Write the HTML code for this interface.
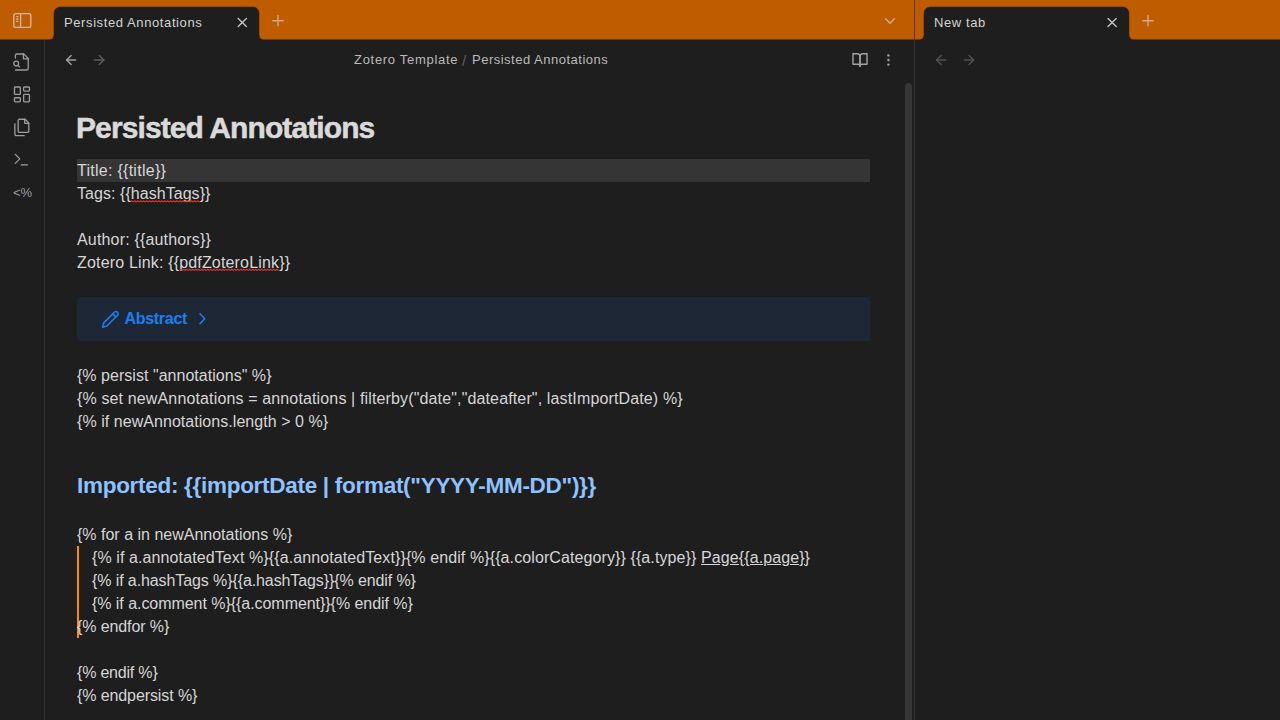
<!DOCTYPE html>
<html><head><meta charset="utf-8">
<style>
*{box-sizing:border-box;margin:0;padding:0}
html,body{width:1280px;height:720px;overflow:hidden;background:#1e1e1e;font-family:"Liberation Sans",sans-serif;color:#dadada}
.abs{position:absolute}
#hdr{left:0;top:0;width:1280px;height:40px;background:#bf5c00}
#ribbon{left:0;top:40px;width:45px;height:680px;background:#1e1e1e;border-right:1px solid #303030}
#divider{left:913px;top:40px;width:2px;height:680px;background:#2a2a2a}
#divider2{left:914px;top:0;width:1px;height:40px;background:#5e3208}
.tabtitle{position:absolute;font-size:13px;color:#d4d4d4;white-space:pre;letter-spacing:0.6px}
.txt{position:absolute;white-space:pre;font-size:16px;line-height:18px;color:#d6d6d6}
svg{position:absolute;overflow:visible}
.ic{fill:none;stroke-linecap:round;stroke-linejoin:round}
</style></head><body>
<div id="hdr" class="abs"></div>
<div id="ribbon" class="abs"></div>
<div id="divider2" class="abs"></div>

<!-- tabs -->
<svg width="1280" height="40" style="left:0;top:0">
  <rect x="0" y="39.4" width="1280" height="0.6" fill="#3a2410"/>
  <path d="M48 40.5 A6 6 0 0 0 54 34.5 V13 A6 6 0 0 1 60 7 H253 A6 6 0 0 1 259 13 V34.5 A6 6 0 0 0 265 40.5" fill="#1e1e1e" stroke="#3a2410" stroke-width="0.6"/>
  <path d="M918 40.5 A6 6 0 0 0 924 34.5 V13 A6 6 0 0 1 930 7 H1123 A6 6 0 0 1 1129 13 V34.5 A6 6 0 0 0 1135 40.5" fill="#1e1e1e" stroke="#3a2410" stroke-width="0.6"/>
  <!-- sidebar toggle -->
  <g class="ic" stroke="#ccb8a4" stroke-width="1.4">
    <rect x="13.8" y="13.6" width="17" height="13.8" rx="2"/>
    <line x1="20.6" y1="13.6" x2="20.6" y2="27.4"/>
    <line x1="16.8" y1="16.6" x2="17.8" y2="16.6"/>
    <line x1="16.8" y1="19" x2="17.8" y2="19"/>
    <line x1="16.8" y1="21.4" x2="17.8" y2="21.4"/>
  </g>
  <!-- close x tab1 -->
  <g class="ic" stroke="#c4c4c4" stroke-width="1.4">
    <line x1="238.2" y1="18.4" x2="246.4" y2="26.6"/><line x1="246.4" y1="18.4" x2="238.2" y2="26.6"/>
    <line x1="1108" y1="18.4" x2="1116.2" y2="26.6"/><line x1="1116.2" y1="18.4" x2="1108" y2="26.6"/>
  </g>
  <!-- plus -->
  <g class="ic" stroke="#c9ad96" stroke-width="1.4">
    <line x1="278" y1="15.5" x2="278" y2="25.8"/><line x1="272.8" y1="20.7" x2="283.2" y2="20.7"/>
    <line x1="1148" y1="15.5" x2="1148" y2="25.8"/><line x1="1142.8" y1="20.7" x2="1153.2" y2="20.7"/>
  </g>
  <!-- chevron down -->
  <polyline class="ic" points="885.6,18.8 890,23.2 894.4,18.8" stroke="#c9ad96" stroke-width="1.4"/>
</svg>
<div class="tabtitle" style="left:64px;top:15px">Persisted Annotations</div>
<div class="tabtitle" style="left:934px;top:15px">New tab</div>

<!-- ribbon icons -->
<svg width="44" height="220" style="left:0;top:40px">
  <g class="ic" stroke="#9c9c9c" stroke-width="1.6">
    <!-- file-search -->
    <g transform="translate(12.2,12.4) scale(0.8)">
      <path d="M4 22h14a2 2 0 0 0 2-2V7.5L14.5 2H6a2 2 0 0 0-2 2v3"/>
      <polyline points="14 2 14 8 20 8"/>
      <circle cx="5" cy="14" r="3"/>
      <path d="M9 18l-1.5-1.5"/>
    </g>
    <!-- layout dashboard -->
    <g transform="translate(12,44.5) scale(0.83)">
      <rect width="7" height="9" x="3" y="3" rx="1"/>
      <rect width="7" height="5" x="14" y="3" rx="1"/>
      <rect width="7" height="9" x="14" y="12" rx="1"/>
      <rect width="7" height="5" x="3" y="16" rx="1"/>
    </g>
    <!-- files -->
    <g transform="translate(12.4,77.6) scale(0.82)">
      <path d="M15.5 2H8.6c-.4 0-.8.2-1.1.5-.3.3-.5.7-.5 1.1v12.8c0 .4.2.8.5 1.1.3.3.7.5 1.1.5h9.8c.4 0 .8-.2 1.1-.5.3-.3.5-.7.5-1.1V6.5L15.5 2z"/>
      <path d="M3 7.6v12.8c0 .4.2.8.5 1.1.3.3.7.5 1.1.5h9.8"/>
      <path d="M15 2v5h5"/>
    </g>
    <!-- terminal -->
    <g transform="translate(12.2,110.5) scale(0.76)">
      <polyline points="4 17 10 11 4 5"/>
      <line x1="12" y1="19" x2="20" y2="19"/>
    </g>
  </g>
</svg>
<div class="abs" style="left:13px;top:185px;font-size:13px;color:#9c9c9c;letter-spacing:0px">&lt;%</div>

<!-- nav header main -->
<svg width="1280" height="40" style="left:0;top:40px">
  <g class="ic" stroke-width="1.5">
    <g stroke="#a0a0a0"><line x1="66.6" y1="20" x2="75.6" y2="20"/><polyline points="71.1,15.5 66.6,20 71.1,24.5"/></g>
    <g stroke="#5c5c5c"><line x1="94.4" y1="20" x2="103.8" y2="20"/><polyline points="99.3,15.5 103.8,20 99.3,24.5"/></g>
    <g stroke="#525252"><line x1="936.6" y1="20" x2="945.8" y2="20"/><polyline points="941.1,15.5 936.6,20 941.1,24.5"/></g>
    <g stroke="#525252"><line x1="964.4" y1="20" x2="973.6" y2="20"/><polyline points="969.1,15.5 973.6,20 969.1,24.5"/></g>
    <g stroke="#a4a4a4" transform="translate(851.6,11.6) scale(0.7)" stroke-width="2">
      <path d="M2 3h6a4 4 0 0 1 4 4v14a3 3 0 0 0-3-3H2z"/>
      <path d="M22 3h-6a4 4 0 0 0-4 4v14a3 3 0 0 1 3-3h7z"/>
    </g>
  </g>
  <g fill="#a4a4a4"><circle cx="888.4" cy="15.4" r="1.2"/><circle cx="888.4" cy="20" r="1.2"/><circle cx="888.4" cy="24.6" r="1.2"/></g>
</svg>
<div class="txt" style="left:354px;top:51px;font-size:13px;color:#bababa;letter-spacing:0.7px">Zotero Template</div>
<div class="txt" style="left:462px;top:52px;font-size:15px;color:#5e5e5e">/</div>
<div class="txt" style="left:472px;top:51px;font-size:13px;color:#bababa;letter-spacing:0.5px">Persisted Annotations</div>

<!-- scrollbar & divider -->
<div class="abs" style="left:905px;top:83px;width:7px;height:640px;background:#363636;border-radius:4px"></div>
<div id="divider" class="abs" style="left:914px;width:1px;background:#333"></div>

<!-- content -->
<div class="txt" style="left:76px;top:111px;font-size:30px;line-height:34px;font-weight:bold;color:#dadada;-webkit-text-stroke:0.5px #dadada;letter-spacing:-0.9px">Persisted Annotations</div>
<div class="abs" style="left:77px;top:159px;width:793px;height:23px;background:#353535"></div>
<div class="txt" style="left:77px;top:162px;letter-spacing:0.27px">Title: {{title}}</div>
<div class="txt" style="left:77px;top:185px;letter-spacing:0.05px">Tags: {{hashTags}}</div>
<div class="txt" style="left:77px;top:231px;letter-spacing:0.17px">Author: {{authors}}</div>
<div class="txt" style="left:77px;top:254px;letter-spacing:0.17px">Zotero Link: {{pdfZoteroLink}}</div>
<div class="abs" style="left:77px;top:297px;width:793px;height:44px;background:#1d2735;border-radius:4px"></div>
<svg width="20" height="20" style="left:101px;top:309.5px">
  <g class="ic" stroke="#1a7ff0" stroke-width="2" transform="scale(0.78)">
    <path d="M17 3a2.85 2.83 0 1 1 4 4L7.5 20.5 2 22l1.5-5.5Z"/>
    <path d="m15 5 4 4"/>
  </g>
</svg>
<div class="txt" style="left:124.5px;top:310px;font-weight:bold;color:#1a7ff0;letter-spacing:-0.3px">Abstract</div>
<svg width="10" height="14" style="left:198px;top:312px"><polyline class="ic" points="2,1.8 6.8,6.8 2,11.6" stroke="#1a7ff0" stroke-width="1.5"/></svg>

<div class="txt" style="left:77px;top:367px;letter-spacing:0.03px">{% persist "annotations" %}</div>
<div class="txt" style="left:77px;top:390px;letter-spacing:0.14px">{% set newAnnotations = annotations | filterby("date","dateafter", lastImportDate) %}</div>
<div class="txt" style="left:77px;top:413px;letter-spacing:0.05px">{% if newAnnotations.length &gt; 0 %}</div>
<div class="txt" style="left:77px;top:473px;font-size:22.5px;line-height:26px;font-weight:bold;color:#8ec1ff;letter-spacing:-0.29px">Imported: {{importDate | format("YYYY-MM-DD")}}</div>
<div class="txt" style="left:77px;top:526px">{% for a in newAnnotations %}</div>
<div class="abs" style="left:77px;top:546px;width:2px;height:92px;background:#fb8c00"></div>
<div class="txt" style="left:92px;top:549px;letter-spacing:0.1px">{% if a.annotatedText %}{{a.annotatedText}}{% endif %}{{a.colorCategory}} {{a.type}} <u>Page{{a.page}}</u></div>
<div class="txt" style="left:92px;top:572px;letter-spacing:-0.1px">{% if a.hashTags %}{{a.hashTags}}{% endif %}</div>
<div class="txt" style="left:92px;top:595px;letter-spacing:-0.05px">{% if a.comment %}{{a.comment}}{% endif %}</div>
<div class="txt" style="left:77px;top:618px;letter-spacing:-0.1px">{% endfor %}</div>
<div class="txt" style="left:77px;top:664px;letter-spacing:-0.2px">{% endif %}</div>
<div class="txt" style="left:77px;top:687px;letter-spacing:-0.1px">{% endpersist %}</div>
<svg width="1280" height="720" style="left:0;top:0"><g fill="none" stroke="#e53935" stroke-width="1.1"><path d="M131 201.3 Q131.75 200.5 132.50 201.3 Q133.25 202.10000000000002 134.00 201.3 Q134.75 200.5 135.50 201.3 Q136.25 202.10000000000002 137.00 201.3 Q137.75 200.5 138.50 201.3 Q139.25 202.10000000000002 140.00 201.3 Q140.75 200.5 141.50 201.3 Q142.25 202.10000000000002 143.00 201.3 Q143.75 200.5 144.50 201.3 Q145.25 202.10000000000002 146.00 201.3 Q146.75 200.5 147.50 201.3 Q148.25 202.10000000000002 149.00 201.3 Q149.75 200.5 150.50 201.3 Q151.25 202.10000000000002 152.00 201.3 Q152.75 200.5 153.50 201.3 Q154.25 202.10000000000002 155.00 201.3 Q155.75 200.5 156.50 201.3 Q157.25 202.10000000000002 158.00 201.3 Q158.75 200.5 159.50 201.3 Q160.25 202.10000000000002 161.00 201.3 Q161.75 200.5 162.50 201.3 Q163.25 202.10000000000002 164.00 201.3 Q164.75 200.5 165.50 201.3 Q166.25 202.10000000000002 167.00 201.3 Q167.75 200.5 168.50 201.3 Q169.25 202.10000000000002 170.00 201.3 Q170.75 200.5 171.50 201.3 Q172.25 202.10000000000002 173.00 201.3 Q173.75 200.5 174.50 201.3 Q175.25 202.10000000000002 176.00 201.3 Q176.75 200.5 177.50 201.3 Q178.25 202.10000000000002 179.00 201.3 Q179.75 200.5 180.50 201.3 Q181.25 202.10000000000002 182.00 201.3 Q182.75 200.5 183.50 201.3 Q184.25 202.10000000000002 185.00 201.3 Q185.75 200.5 186.50 201.3 Q187.25 202.10000000000002 188.00 201.3 Q188.75 200.5 189.50 201.3 Q190.25 202.10000000000002 191.00 201.3 Q191.75 200.5 192.50 201.3 Q193.25 202.10000000000002 194.00 201.3 Q194.75 200.5 195.50 201.3 Q196.25 202.10000000000002 197.00 201.3 Q197.75 200.5 198.50 201.3 Q199.25 202.10000000000002 200.00 201.3"/><path d="M180 269.8 Q180.75 269.0 181.50 269.8 Q182.25 270.6 183.00 269.8 Q183.75 269.0 184.50 269.8 Q185.25 270.6 186.00 269.8 Q186.75 269.0 187.50 269.8 Q188.25 270.6 189.00 269.8 Q189.75 269.0 190.50 269.8 Q191.25 270.6 192.00 269.8 Q192.75 269.0 193.50 269.8 Q194.25 270.6 195.00 269.8 Q195.75 269.0 196.50 269.8 Q197.25 270.6 198.00 269.8 Q198.75 269.0 199.50 269.8 Q200.25 270.6 201.00 269.8 Q201.75 269.0 202.50 269.8 Q203.25 270.6 204.00 269.8 Q204.75 269.0 205.50 269.8 Q206.25 270.6 207.00 269.8 Q207.75 269.0 208.50 269.8 Q209.25 270.6 210.00 269.8 Q210.75 269.0 211.50 269.8 Q212.25 270.6 213.00 269.8 Q213.75 269.0 214.50 269.8 Q215.25 270.6 216.00 269.8 Q216.75 269.0 217.50 269.8 Q218.25 270.6 219.00 269.8 Q219.75 269.0 220.50 269.8 Q221.25 270.6 222.00 269.8 Q222.75 269.0 223.50 269.8 Q224.25 270.6 225.00 269.8 Q225.75 269.0 226.50 269.8 Q227.25 270.6 228.00 269.8 Q228.75 269.0 229.50 269.8 Q230.25 270.6 231.00 269.8 Q231.75 269.0 232.50 269.8 Q233.25 270.6 234.00 269.8 Q234.75 269.0 235.50 269.8 Q236.25 270.6 237.00 269.8 Q237.75 269.0 238.50 269.8 Q239.25 270.6 240.00 269.8 Q240.75 269.0 241.50 269.8 Q242.25 270.6 243.00 269.8 Q243.75 269.0 244.50 269.8 Q245.25 270.6 246.00 269.8 Q246.75 269.0 247.50 269.8 Q248.25 270.6 249.00 269.8 Q249.75 269.0 250.50 269.8 Q251.25 270.6 252.00 269.8 Q252.75 269.0 253.50 269.8 Q254.25 270.6 255.00 269.8 Q255.75 269.0 256.50 269.8 Q257.25 270.6 258.00 269.8 Q258.75 269.0 259.50 269.8 Q260.25 270.6 261.00 269.8 Q261.75 269.0 262.50 269.8 Q263.25 270.6 264.00 269.8 Q264.75 269.0 265.50 269.8 Q266.25 270.6 267.00 269.8 Q267.75 269.0 268.50 269.8 Q269.25 270.6 270.00 269.8 Q270.75 269.0 271.50 269.8 Q272.25 270.6 273.00 269.8 Q273.75 269.0 274.50 269.8 Q275.25 270.6 276.00 269.8 Q276.75 269.0 277.50 269.8 Q278.25 270.6 279.00 269.8"/></g></svg>
</body></html>
